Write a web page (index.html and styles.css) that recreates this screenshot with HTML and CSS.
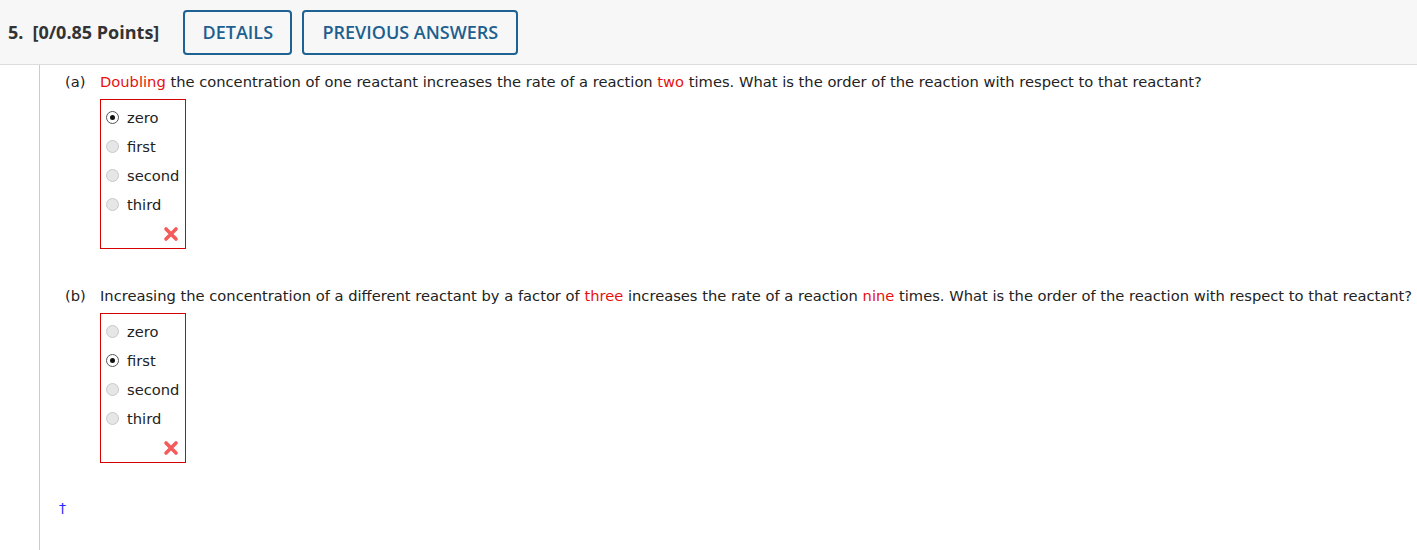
FILE: index.html
```html
<!DOCTYPE html>
<html>
<head>
<meta charset="utf-8">
<link rel="stylesheet" href="styles.css">
</head>
<body>
<div class="header">
  <span class="qnum">5.</span>
  <span class="points">[0/0.85 Points]</span>
  <button class="btn btn-details">DETAILS</button>
  <button class="btn btn-prev">PREVIOUS ANSWERS</button>
</div>
<div class="main">
  <div class="gutter"></div>
  <div class="content">
    <div class="part">
      <div class="qrow">
        <span class="plabel">(a)</span>
        <span class="qtext"><span class="red">Doubling</span> the concentration of one reactant increases the rate of a reaction <span class="red">two</span> times. What is the order of the reaction with respect to that reactant?</span>
      </div>
      <div class="answers">
        <div class="opt"><span class="radio checked"></span><span class="olabel">zero</span></div>
        <div class="opt"><span class="radio"></span><span class="olabel">first</span></div>
        <div class="opt"><span class="radio"></span><span class="olabel">second</span></div>
        <div class="opt"><span class="radio"></span><span class="olabel">third</span></div>
        <div class="mark"><svg width="16" height="16" viewBox="0 0 16 16"><path d="M3 3 L13 13 M13 3 L3 13" stroke="#f45b5b" stroke-width="3.6" stroke-linecap="round"/></svg></div>
      </div>
    </div>
    <div class="part part-b">
      <div class="qrow">
        <span class="plabel">(b)</span>
        <span class="qtext">Increasing the concentration of a different reactant by a factor of <span class="red">three</span> increases the rate of a reaction <span class="red">nine</span> times. What is the order of the reaction with respect to that reactant?</span>
      </div>
      <div class="answers">
        <div class="opt"><span class="radio"></span><span class="olabel">zero</span></div>
        <div class="opt"><span class="radio checked"></span><span class="olabel">first</span></div>
        <div class="opt"><span class="radio"></span><span class="olabel">second</span></div>
        <div class="opt"><span class="radio"></span><span class="olabel">third</span></div>
        <div class="mark"><svg width="16" height="16" viewBox="0 0 16 16"><path d="M3 3 L13 13 M13 3 L3 13" stroke="#f45b5b" stroke-width="3.6" stroke-linecap="round"/></svg></div>
      </div>
    </div>
    <div class="dagger">†</div>
  </div>
</div>
</body>
</html>
```
FILE: styles.css
```css
html, body {
  margin: 0;
  padding: 0;
  background: #ffffff;
}
body {
  font-family: "DejaVu Sans", Verdana, sans-serif;
  color: #222;
  height: 550px;
  overflow: hidden;
}
.header {
  height: 64px;
  background: #f7f7f7;
  border-bottom: 1px solid #dcdcdc;
  display: flex;
  align-items: center;
  padding-left: 8px;
  box-sizing: content-box;
  font-family: "Open Sans", sans-serif;
}
.qnum {
  font-weight: 700;
  font-size: 18px;
  color: #333;
  margin-right: 9px;
}
.points {
  font-weight: 700;
  font-size: 18px;
  color: #333;
  margin-right: 24px;
}
.btn {
  font-family: "Open Sans", sans-serif;
  font-weight: 600;
  font-size: 18px;
  color: #1d5f8f;
  background: #f7f7f7;
  border: 2px solid #1d6293;
  border-radius: 4px;
  height: 45px;
  padding: 0 10px;
  margin: 0 10px 0 0;
  cursor: pointer;
}
.btn-details { width: 109px; }
.btn-prev { width: 216px; }
.main {
  display: flex;
  height: 485px;
}
.gutter {
  width: 39px;
  border-right: 1px solid #cccccc;
  flex: none;
}
.content {
  flex: 1;
  padding-left: 25px;
  padding-top: 7px;
  font-size: 14.7px;
  white-space: nowrap;
}
.qrow {
  display: flex;
  line-height: 20px;
}
.plabel {
  width: 35px;
  flex: none;
}
.red { color: #e8100f; }
.answers {
  margin-left: 35px;
  margin-top: 7px;
  width: 86px;
  height: 150px;
  border: 1px solid #d60000;
  padding-top: 3px;
  box-sizing: border-box;
}
.opt {
  display: flex;
  align-items: center;
  height: 29px;
  padding-left: 5px;
}
.radio {
  width: 11px;
  height: 11px;
  border-radius: 50%;
  border: 1px solid #c8c8c8;
  background: #e6e6e6;
  margin-right: 8px;
  flex: none;
  position: relative;
}
.radio.checked {
  border: 1px solid #555;
  background: #fff;
}
.radio.checked::after {
  content: "";
  position: absolute;
  left: 3px;
  top: 3px;
  width: 5px;
  height: 5px;
  border-radius: 50%;
  background: #111;
}
.olabel { color: #222; }
.mark {
  display: flex;
  justify-content: flex-end;
  padding-right: 6px;
  padding-top: 7px;
}
.mark svg { display: block; }
.part-b { margin-top: 37px; }
.dagger {
  margin-top: 37px;
  margin-left: -6px;
  color: #1a2cff;
  font-size: 14px;
}
```
